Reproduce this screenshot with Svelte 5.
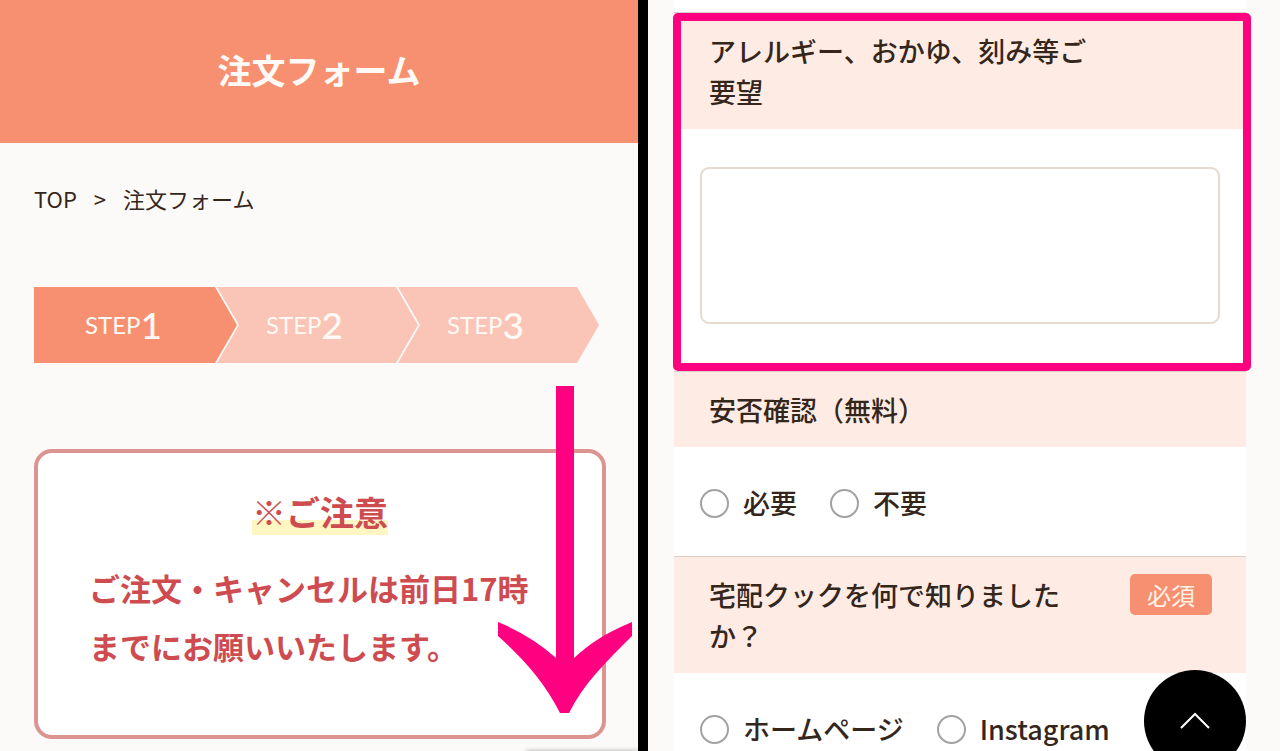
<script lang="ts">
  const steps = [1, 2, 3];
  const safety = ['必要', '不要'];
  const sources = ['ホームページ', 'Instagram'];
</script>

<div class="board">
  <section class="pane intro">
    <header><h1>注文フォーム</h1></header>
    <nav class="crumbs" aria-label="breadcrumb">
      <a href="#top">TOP</a><span>&gt;</span><span>注文フォーム</span>
    </nav>
    <ol class="steps">
      {#each steps as n}
        <li class:current={n === 1}>STEP<b>{n}</b></li>
      {/each}
    </ol>
    <div class="notice">
      <h2><span>※ご注意</span></h2>
      <p>ご注文・キャンセルは前日17時までにお願いいたします。</p>
    </div>
    <svg class="arrow" viewBox="0 0 134 328" aria-hidden="true">
      <path d="M58 0H76V272C90 259 107 247 134 236V250C108 276 86 297 71 327H62C47 297 26 273 0 250V236Q34 250 58 272Z" />
    </svg>
    <div class="peek"></div>
  </section>

  <div class="divider"></div>

  <section class="pane entry">
    <form>
      <div class="row marked">
        <div class="head"><label for="request">アレルギー、おかゆ、刻み等ご要望</label></div>
        <div class="body area"><textarea id="request"></textarea></div>
      </div>
      <fieldset class="row" aria-labelledby="safety-title">
        <div class="head"><span id="safety-title">安否確認（無料）</span></div>
        <div class="body options">
          {#each safety as name}
            <label><input type="radio" name="safety" value={name} />{name}</label>
          {/each}
        </div>
      </fieldset>
      <fieldset class="row" aria-labelledby="source-title">
        <div class="head">
          <span id="source-title">宅配クックを何で知りましたか？</span>
          <em>必須</em>
        </div>
        <div class="body options">
          {#each sources as name}
            <label><input type="radio" name="source" value={name} />{name}</label>
          {/each}
        </div>
      </fieldset>
    </form>
    <button class="to-top" type="button" aria-label="ページの先頭へ">
      <svg viewBox="0 0 30 18" aria-hidden="true"><path d="M1 16 15 2 29 16" /></svg>
    </button>
  </section>
</div>

<style>
  :global(body) {
    margin: 0;
  }
  .board {
    display: grid;
    grid-template-columns: minmax(0, 638fr) 10px minmax(0, 632fr);
    height: 100vh;
    overflow: hidden;
    background: #fcfaf8;
    color: #35261c;
    font-family: 'Noto Sans CJK JP', sans-serif;
  }
  .pane {
    position: relative;
    overflow: hidden;
  }
  .divider {
    background: #000;
  }
  h1,
  h2,
  p,
  ol {
    margin: 0;
    padding: 0;
  }
  header {
    padding: 44px 0 48px;
    background: #f69070;
    color: #fffaf5;
    text-align: center;
  }
  h1 {
    font-size: 34px;
    line-height: 51px;
    font-weight: 700;
  }
  .crumbs {
    display: flex;
    gap: 17px;
    margin: 38px 34px 0;
    font-size: 22px;
    line-height: 34px;
  }
  .crumbs a {
    color: inherit;
    text-decoration: none;
  }
  .steps {
    display: flex;
    margin: 72px 39px 0 34px;
    padding-right: 22px;
    list-style: none;
  }
  .steps li {
    flex: 1;
    box-sizing: border-box;
    height: 76px;
    margin-right: -22px;
    padding-right: 24px;
    display: flex;
    align-items: center;
    justify-content: center;
    background: #fac5b6;
    color: #fffaf5;
    font-family: Lato, sans-serif;
    font-size: 24px;
    line-height: 72px;
    clip-path: polygon(2px 0, calc(100% - 22px) 0, 100% 50%, calc(100% - 22px) 100%, 2px 100%, 24px 50%);
  }
  .steps li.current {
    background: #f69070;
    clip-path: polygon(0 0, calc(100% - 22px) 0, 100% 50%, calc(100% - 22px) 100%, 0 100%);
  }
  .steps b {
    font-size: 37px;
    font-weight: 500;
  }
  .notice {
    margin: 86px 32px 0 34px;
    padding: 36px 51px 60px;
    border: 4px solid #dc9490;
    border-radius: 18px;
    background: #fff;
    color: #ce4c50;
    font-weight: 700;
  }
  h2 {
    font-size: 34px;
    line-height: 46px;
    text-align: center;
  }
  h2 span {
    display: inline-block;
    background: linear-gradient(transparent 67%, #fff6c4 67%);
  }
  .notice p {
    margin-top: 24px;
    font-size: 31px;
    line-height: 58px;
  }
  .arrow {
    position: absolute;
    top: 386px;
    right: 6px;
    width: 134px;
    fill: #ff0080;
  }
  .peek {
    position: absolute;
    right: 0;
    bottom: -4px;
    width: 112px;
    height: 4px;
    box-shadow: 0 0 5px #0005;
  }
  form {
    margin: 0 34px 0 26px;
    padding-top: 12px;
    background: #fff;
  }
  .row {
    position: relative;
    min-width: 0;
    margin: 0;
    padding: 0;
    border: 0;
    border-top: 1px solid #dccfc4;
  }
  .marked::after {
    content: '';
    position: absolute;
    inset: 0 -5px 0 -1px;
    border: 8px solid #ff0080;
    border-radius: 5px;
    pointer-events: none;
  }
  .head {
    display: grid;
    grid-template-columns: minmax(0, 1fr) 82px;
    gap: 30px;
    padding: 17px 34px 17px 35px;
    background: #feece4;
    font-size: 27px;
    line-height: 41px;
    font-weight: 500;
  }
  .head em {
    align-self: start;
    border-radius: 5px;
    background: #f69070;
    color: #fff3e8;
    font-size: 24px;
    font-style: normal;
    font-weight: 400;
    text-align: center;
  }
  .body {
    padding: 36px 26px 33px;
  }
  .area {
    padding: 38px 26px 47px;
  }
  textarea {
    display: block;
    box-sizing: border-box;
    width: 100%;
    height: 157px;
    border: 2px solid #e4dace;
    border-radius: 9px;
    background: #fff;
    resize: none;
    font: inherit;
  }
  .options {
    display: flex;
    gap: 33px;
    font-size: 27px;
    line-height: 40px;
    font-weight: 500;
  }
  .options label {
    display: flex;
    align-items: center;
    gap: 14px;
  }
  .options input {
    appearance: none;
    box-sizing: border-box;
    width: 29px;
    height: 29px;
    margin: 0;
    border: 2px solid #a2a2a2;
    border-radius: 50%;
    background: #fff;
  }
  .to-top {
    position: absolute;
    right: 34px;
    bottom: -21px;
    display: grid;
    place-items: center;
    width: 102px;
    height: 102px;
    padding: 0;
    border: 0;
    border-radius: 50%;
    background: #000;
  }
  .to-top svg {
    width: 30px;
    fill: none;
    stroke: #fff;
    stroke-width: 2;
  }
</style>
